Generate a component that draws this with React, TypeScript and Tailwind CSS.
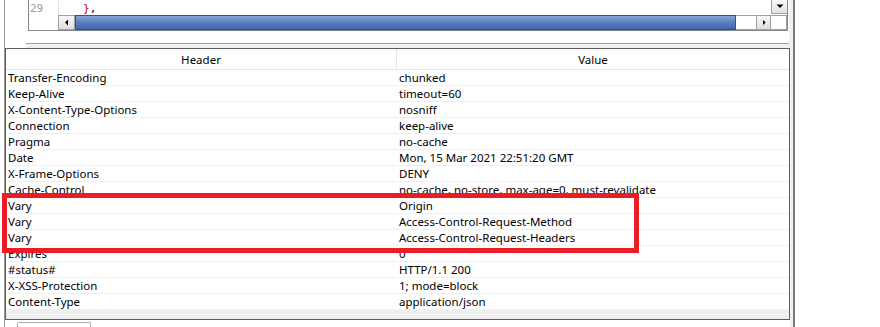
import React from "react";

const rows: [string, string][] = [
  ["Transfer-Encoding", "chunked"],
  ["Keep-Alive", "timeout=60"],
  ["X-Content-Type-Options", "nosniff"],
  ["Connection", "keep-alive"],
  ["Pragma", "no-cache"],
  ["Date", "Mon, 15 Mar 2021 22:51:20 GMT"],
  ["X-Frame-Options", "DENY"],
  ["Cache-Control", "no-cache, no-store, max-age=0, must-revalidate"],
  ["Vary", "Origin"],
  ["Vary", "Access-Control-Request-Method"],
  ["Vary", "Access-Control-Request-Headers"],
  ["Expires", "0"],
  ["#status#", "HTTP/1.1 200"],
  ["X-XSS-Protection", "1; mode=block"],
  ["Content-Type", "application/json"],
];

function ArrowBtn({ dir }: { dir: "left" | "right" | "down" }) {
  const pts =
    dir === "left" ? "6,7.5 9,4.5 9,10.5" : dir === "right" ? "7,4.5 10,7.5 7,10.5" : "4.5,5.5 11.5,5.5 8,9";
  return (
    <svg width="15" height="15" viewBox="0 0 15 15" className="block">
      <polygon points={pts} fill="#000" />
    </svg>
  );
}

export default function App() {
  return (
    <div className="w-[880px] h-[327px] bg-white relative overflow-hidden text-black" style={{ fontFamily: '"Noto Sans", sans-serif' }}>
      <div className="ml-[4px] w-[791px] h-full border-l border-l-[#9a9a9a] border-r-2 border-r-[#7a7a7a] flex flex-col">
        {/* editor panel */}
        <div className="flex h-[48px] shrink-0">
          <div className="w-[21px] bg-white" />
          <div className="w-[763px] flex flex-col">
            <div className="h-[43px] bg-white pl-[2px] pr-[1px]">
              <div className="h-[31px] border-x border-b border-[#828790] flex flex-col">
                <div className="h-[15px] flex">
                  <div className="w-[29px] bg-white flex items-end pl-[1px] pb-[1px] text-[11px] leading-none text-[#9a9a9a]" style={{ fontFamily: '"DejaVu Sans Mono", monospace' }}>
                    29
                  </div>
                  <div className="flex-1 border-l border-[#e4e4e4] flex items-end pl-[24px] pb-[1px] text-[11px] leading-none" style={{ fontFamily: '"DejaVu Sans Mono", monospace' }}>
                    <span className="text-[#e00000]">{"}"}</span>
                    <span>,</span>
                  </div>
                  <div className="w-[16px] h-[14px] border-l border-b border-[#a0a0a0] bg-gradient-to-b from-[#f8f8f8] to-[#e2e2e2] flex items-center justify-center">
                    <ArrowBtn dir="down" />
                  </div>
                </div>
                <div className="h-[15px] flex">
                  <div className="w-[29px] bg-white" />
                  <div className="w-[17px] border border-[#a0a0a0] bg-gradient-to-b from-[#f8f8f8] to-[#dedede] flex items-center justify-center">
                    <ArrowBtn dir="left" />
                  </div>
                  <div className="flex-1 border border-[#2f4f8f] bg-gradient-to-b from-[#88a5d8] via-[#5a7dbe] to-[#4467aa]" />
                  <div className="w-[20px] bg-white border-y border-[#a0a0a0]" />
                  <div className="w-[15px] border border-[#a0a0a0] bg-gradient-to-b from-[#f8f8f8] to-[#dedede] flex items-center justify-center">
                    <ArrowBtn dir="right" />
                  </div>
                  <div className="w-[16px] bg-white border-y border-r border-[#a0a0a0]" />
                </div>
              </div>
            </div>
            <div className="h-px bg-[#a0a0a0]" />
            <div className="flex-1 bg-[#f0f0f0]" />
          </div>
          <div className="w-[4px] bg-[#f0f0f0]" />
        </div>

        {/* headers table */}
        <div className="flex h-[272px] shrink-0">
          <div className="w-[785px] border border-[#5e5e5e] flex flex-col text-[11.5px]">
            <div className="h-[21px] flex border-b border-[#e5e5e5] bg-white pt-[2px]">
              <div className="w-[391px] -mt-[2px] border-r border-[#e5e5e5] flex items-center justify-center pt-[2px]">Header</div>
              <div className="flex-1 flex items-center justify-center">Value</div>
            </div>
            {rows.map(([h, v], i) => (
              <div key={i} className="h-[16px] flex border-b border-[#f0f0f0] bg-white leading-[15px]">
                <div className="w-[391px] pl-[2px] whitespace-nowrap">{h}</div>
                <div className="flex-1 pl-[2px] whitespace-nowrap">{v}</div>
              </div>
            ))}
            <div className="flex-1 bg-[#f0f0f0]" />
          </div>
          <div className="w-[3px] bg-[#f0f0f0]" />
        </div>

        {/* bottom */}
        <div className="flex flex-1">
          <div className="w-[785px] pl-[12px] pt-[2px]">
            <div className="w-[74px] h-[10px] border-x border-t border-[#adadad] rounded-t-[2px] bg-white" />
          </div>
          <div className="w-[3px] bg-[#f0f0f0]" />
        </div>
      </div>

      {/* annotation */}
      <div className="absolute left-[2px] top-[193px] w-[637px] h-[60px] border-[5px] border-[#ed1c24]" />
    </div>
  );
}
